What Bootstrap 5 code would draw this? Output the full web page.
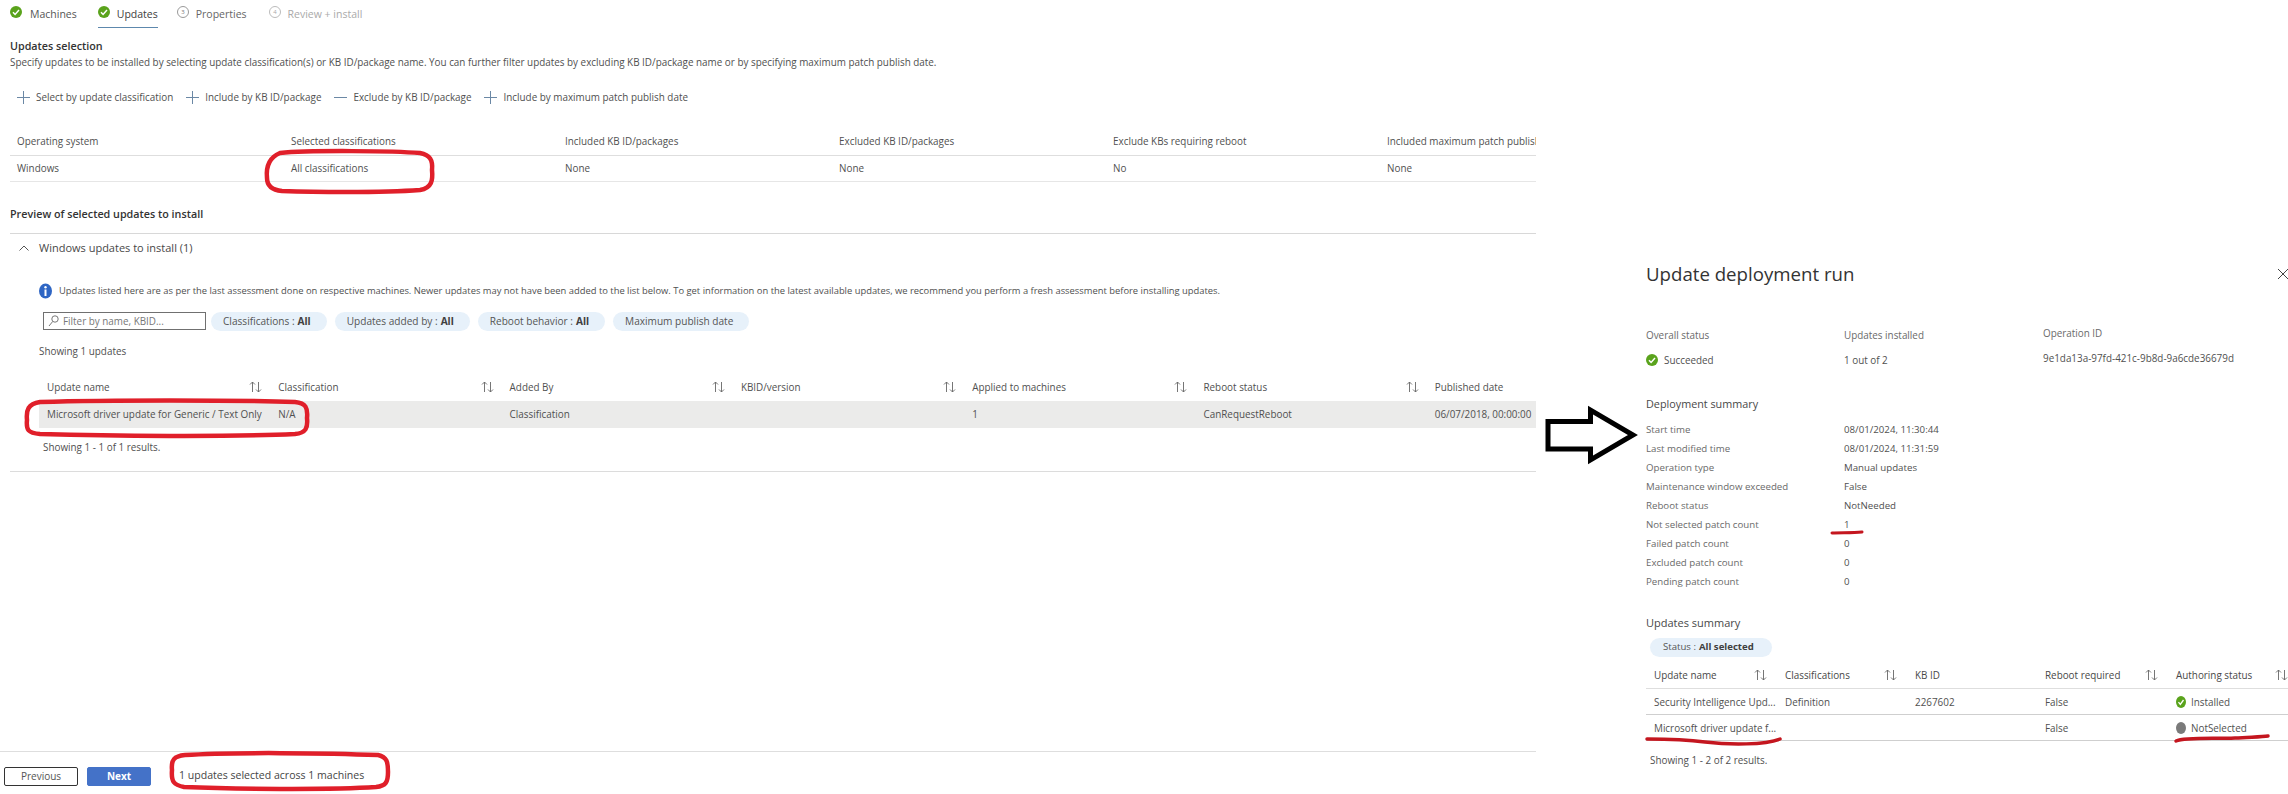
<!DOCTYPE html>
<html lang="en">
<head>
<meta charset="utf-8">
<title>Update deployment</title>
<link rel="stylesheet" href="https://cdn.jsdelivr.net/npm/bootstrap@5.3.0/dist/css/bootstrap.min.css">
<style>
body{background:#fff;color:#505050;font-family:"Open Sans","Liberation Sans",sans-serif;font-size:9.9px;line-height:16px;overflow:hidden}
.page-shell{width:2288px;height:794px;position:relative;overflow:hidden}
.left-pane{width:1536px;height:794px}
.pane-body{padding-left:10px}
.step-bar{height:27px;gap:20px}
.step-item{height:28px;gap:7px;font-size:10.5px;color:#555;padding-top:6px}
.step-item:first-child{gap:8px}
.step-item.current{border-bottom:1.5px solid #5d88ad;color:#404040;margin-left:1px;margin-right:-1px}
.step-item.todo{color:#aaa;margin-left:2px}
.step-item .step-next{color:#666}
.sec-title{font-weight:600;font-size:10.75px;color:#333;margin:0;line-height:16px}
.title-top{margin-top:11px}
.cmd-bar{margin-top:15px;height:24px;padding-left:6.5px;gap:12.5px;font-size:9.9px}
.cmd-item{gap:6.500px}
.cmd-item svg{flex:none}
.sum-wrap{margin-top:18px;width:1526px;overflow:hidden}
.sum-table{width:1644px;table-layout:fixed;margin:0;--bs-table-bg:transparent;--bs-table-color:#505050}
.sum-table th,.sum-table td{font-weight:400;padding:0 0 0 7px;white-space:nowrap;vertical-align:middle;overflow:hidden}
.sum-table th{height:28px;border-bottom:1px solid #dedede}
.sum-table td{height:26px;border-bottom:1px solid #e6e6e6}
.preview-title{margin-top:24px}
.accord-head{margin-top:11px;border-top:1px solid #d8d8d8;height:29px;padding-left:9px;gap:10px;font-size:11px;color:#484848}
.accord-body{padding-left:29px}
.info-line{margin-top:21px;padding-left:0;gap:7px;font-size:9.4px}
.filter-row{margin-top:13px;padding-left:4px;height:19px}
.filter-box{width:163px;height:18px;border:1px solid #707070;gap:4px;padding-left:4px;margin-right:5px;background:#fff}
.filter-box input{border:0;padding:0;font-size:9.9px;line-height:14px;height:14px;background:transparent;border-radius:0;color:#777;box-shadow:none}
.filter-box input::placeholder{color:#777;opacity:1}
.chip{height:19px;background:#e7f1fa;color:#555;border-radius:10px;padding:0 16px 0 12px;margin-right:8px;white-space:nowrap;display:inline-flex;align-items:center;font-size:10.1px}
.chip b{font-weight:700;color:#404040;margin-left:3px}
.count-line{margin-top:12px}
.upd-table{width:1497px;table-layout:fixed;margin:14px 0 0;--bs-table-bg:transparent;--bs-table-color:#505050}
.upd-table th,.upd-table td{font-weight:400;padding:0 0 0 8px;white-space:nowrap;border:0;overflow:hidden;vertical-align:middle}
.upd-table th{height:28px}
.upd-table td{height:27px;background:#ebebea}
.col-norm{width:231.3px}
.head-flex{padding-right:8px}
.tail-line{margin:11px 0 0 4px}
.sep-line{margin-top:16px;border-top:1px solid #dcdcdc}
.foot-bar{height:43px;border-top:1px solid #dedede;padding:15px 0 0 4px}
.btn-prev,.btn-go{height:19px;font-size:10px;line-height:17px;padding:0;border-radius:2px}
.btn-prev{width:74px;border:1px solid #333;background:#fff;color:#555;margin-right:9px}
.btn-go{width:64px;border:1px solid #4472c8;background:#4472c8;color:#fff;font-weight:700;margin-right:28px}
.foot-note{font-size:10.55px;color:#444}
.right-pane{margin-left:110px;width:642px;padding-top:261px}
.panel-title{font-size:18.65px;line-height:26px;margin:0;color:#333;font-weight:400}
.stat-row{margin-top:40px}
.stat-a{width:198px}
.stat-b{width:199px}
.stat-c{margin-top:-2px}
.stat-val{margin-top:9px;gap:6px}
.lab-muted{color:#6a6a6a}
.sub-title{font-size:10.8px;line-height:16px;color:#484848;margin:0;font-weight:400}
.dep-title{margin-top:28px}
.kv-list{margin:7.5px 0 0;font-size:9.7px}
.kv-row{height:19px;line-height:19px}
.kv-row dt{font-weight:400;width:198px;color:#6a6a6a}
.kv-row dd{margin:0}
.upd-sum{margin-top:24px;font-size:11px}
.chip-status{margin:7px 0 0 4px;width:121.5px;padding:0 0 0 13px;font-size:9.6px}
.run-wrap{margin-top:6px;width:642px;overflow:hidden}
.run-table{width:652px;table-layout:fixed;margin:0;--bs-table-bg:transparent;--bs-table-color:#505050}
.run-table th,.run-table td{font-weight:400;padding:0 0 0 8px;white-space:nowrap;overflow:hidden;vertical-align:middle}
.run-table th{height:26px;border-bottom:1px solid #dedede;color:#484848}
.run-table td{height:26px;border-bottom:1px solid #cfcfcf}
.c1{width:131px}.c2{width:130px}.c3{width:130px}.c4{width:131px}.c5{width:130px}
.head-run{padding-right:10px}
.cell-stat{gap:5px}
.overlay-ink{position:absolute;left:0;top:0;pointer-events:none}
</style>
</head>
<body>
<div class="page-shell d-flex">
  <main class="left-pane d-flex flex-column">
    <div class="pane-body">
      <div class="step-bar d-flex">
        <div class="step-item d-flex"><svg width="12" height="12" viewBox="0 0 12 12"><circle cx="6" cy="6" r="6" fill="#5aa31c"/><path d="M3 6.2l2.1 2.2L9 4" fill="none" stroke="#fff" stroke-width="1.5"/></svg><span class="step-lbl">Machines</span></div>
        <div class="step-item current d-flex"><svg width="12" height="12" viewBox="0 0 12 12"><circle cx="6" cy="6" r="6" fill="#5aa31c"/><path d="M3 6.2l2.1 2.2L9 4" fill="none" stroke="#fff" stroke-width="1.5"/></svg><span>Updates</span></div>
        <div class="step-item d-flex"><svg width="12" height="12" viewBox="0 0 12 12"><circle cx="6" cy="6" r="5.500" fill="none" stroke="#999"/><text x="6" y="8" font-size="6" text-anchor="middle" fill="#777">3</text></svg><span class="step-next">Properties</span></div>
        <div class="step-item todo d-flex"><svg width="12" height="12" viewBox="0 0 12 12"><circle cx="6" cy="6" r="5.500" fill="none" stroke="#bbb"/><text x="6" y="8" font-size="6" text-anchor="middle" fill="#aaa">4</text></svg><span>Review + install</span></div>
      </div>
      <h2 class="sec-title title-top">Updates selection</h2>
      <p class="mb-0">Specify updates to be installed by selecting update classification(s) or KB ID/package name. You can further filter updates by excluding KB ID/package name or by specifying maximum patch publish date.</p>
      <div class="cmd-bar d-flex align-items-center">
        <span class="cmd-item d-flex align-items-center"><svg width="13" height="13" viewBox="0 0 13 13"><path d="M6.500 0v13M0 6.500h13" stroke="#6b88a5" fill="none"/></svg>Select by update classification</span>
        <span class="cmd-item d-flex align-items-center"><svg width="13" height="13" viewBox="0 0 13 13"><path d="M6.500 0v13M0 6.500h13" stroke="#6b88a5" fill="none"/></svg>Include by KB ID/package</span>
        <span class="cmd-item d-flex align-items-center"><svg width="13" height="13" viewBox="0 0 13 13"><path d="M0 6.500h13" stroke="#6b88a5" fill="none"/></svg>Exclude by KB ID/package</span>
        <span class="cmd-item d-flex align-items-center"><svg width="13" height="13" viewBox="0 0 13 13"><path d="M6.500 0v13M0 6.500h13" stroke="#6b88a5" fill="none"/></svg>Include by maximum patch publish date</span>
      </div>
      <div class="sum-wrap">
        <table class="table sum-table">
          <thead><tr><th>Operating system</th><th>Selected classifications</th><th>Included KB ID/packages</th><th>Excluded KB ID/packages</th><th>Exclude KBs requiring reboot</th><th>Included maximum patch publish date</th></tr></thead>
          <tbody><tr><td>Windows</td><td>All classifications</td><td>None</td><td>None</td><td>No</td><td>None</td></tr></tbody>
        </table>
      </div>
      <h2 class="sec-title preview-title">Preview of selected updates to install</h2>
      <div class="accord-head d-flex align-items-center"><svg width="10" height="6" viewBox="0 0 10 6"><path d="M.5 5.500L5 1l4.500 4.500" fill="none" stroke="#555"/></svg>Windows updates to install (1)</div>
      <div class="accord-body">
        <div class="info-line d-flex align-items-center"><svg class="flex-shrink-0" width="13" height="16" viewBox="0 0 13 16"><ellipse cx="6.500" cy="8" rx="6.500" ry="7.500" fill="#2f66c4"/><circle cx="6.500" cy="4.300" r="1.200" fill="#fff"/><rect x="5.500" y="6.500" width="2" height="6.500" fill="#fff"/></svg><span>Updates listed here are as per the last assessment done on respective machines. Newer updates may not have been added to the list below. To get information on the latest available updates, we recommend you perform a fresh assessment before installing updates.</span></div>
        <div class="filter-row d-flex align-items-center">
          <div class="filter-box d-flex align-items-center"><svg class="flex-shrink-0" width="11" height="12" viewBox="0 0 11 12"><circle cx="7" cy="4" r="3.200" fill="none" stroke="#777"/><path d="M4.700 6.500L1 11" stroke="#777" fill="none"/></svg><input class="form-control" placeholder="Filter by name, KBID..." aria-label="Filter"></div>
          <span class="chip">Classifications :<b>All</b></span>
          <span class="chip">Updates added by :<b>All</b></span>
          <span class="chip">Reboot behavior :<b>All</b></span>
          <span class="chip">Maximum publish date</span>
        </div>
        <div class="count-line">Showing 1 updates</div>
        <table class="table upd-table">
          <colgroup><col class="col-norm"><col class="col-norm"><col class="col-norm"><col class="col-norm"><col class="col-norm"><col class="col-norm"><col></colgroup>
          <thead><tr>
            <th><div class="head-flex d-flex justify-content-between align-items-center">Update name<svg width="13" height="12" viewBox="0 0 13 12"><path d="M3.500 11V1M1 3.500L3.500 1 6 3.500M9.500 1v10M7 8.500L9.500 11 12 8.500" fill="none" stroke="#666" stroke-width=".9"/></svg></div></th>
            <th><div class="head-flex d-flex justify-content-between align-items-center">Classification<svg width="13" height="12" viewBox="0 0 13 12"><path d="M3.500 11V1M1 3.500L3.500 1 6 3.500M9.500 1v10M7 8.500L9.500 11 12 8.500" fill="none" stroke="#666" stroke-width=".9"/></svg></div></th>
            <th><div class="head-flex d-flex justify-content-between align-items-center">Added By<svg width="13" height="12" viewBox="0 0 13 12"><path d="M3.500 11V1M1 3.500L3.500 1 6 3.500M9.500 1v10M7 8.500L9.500 11 12 8.500" fill="none" stroke="#666" stroke-width=".9"/></svg></div></th>
            <th><div class="head-flex d-flex justify-content-between align-items-center">KBID/version<svg width="13" height="12" viewBox="0 0 13 12"><path d="M3.500 11V1M1 3.500L3.500 1 6 3.500M9.500 1v10M7 8.500L9.500 11 12 8.500" fill="none" stroke="#666" stroke-width=".9"/></svg></div></th>
            <th><div class="head-flex d-flex justify-content-between align-items-center">Applied to machines<svg width="13" height="12" viewBox="0 0 13 12"><path d="M3.500 11V1M1 3.500L3.500 1 6 3.500M9.500 1v10M7 8.500L9.500 11 12 8.500" fill="none" stroke="#666" stroke-width=".9"/></svg></div></th>
            <th><div class="head-flex d-flex justify-content-between align-items-center">Reboot status<svg width="13" height="12" viewBox="0 0 13 12"><path d="M3.500 11V1M1 3.500L3.500 1 6 3.500M9.500 1v10M7 8.500L9.500 11 12 8.500" fill="none" stroke="#666" stroke-width=".9"/></svg></div></th>
            <th>Published date</th>
          </tr></thead>
          <tbody><tr><td>Microsoft driver update for Generic / Text Only</td><td>N/A</td><td>Classification</td><td></td><td>1</td><td>CanRequestReboot</td><td>06/07/2018, 00:00:00</td></tr></tbody>
        </table>
        <div class="tail-line">Showing 1 - 1 of 1 results.</div>
      </div>
      <div class="sep-line"></div>
    </div>
    <div class="foot-bar mt-auto d-flex align-items-start">
      <button class="btn btn-prev" type="button">Previous</button>
      <button class="btn btn-go" type="button">Next</button>
      <span class="foot-note">1 updates selected across 1 machines</span>
    </div>
  </main>
  <aside class="right-pane flex-shrink-0">
    <div class="d-flex justify-content-between align-items-center">
      <h1 class="panel-title">Update deployment run</h1>
      <svg width="10" height="10" viewBox="0 0 10 10"><path d="M0 0l10 10M10 0L0 10" stroke="#444" fill="none"/></svg>
    </div>
    <div class="stat-row d-flex">
      <div class="stat-a"><div class="lab-muted">Overall status</div><div class="stat-val d-flex align-items-center"><svg width="12" height="12" viewBox="0 0 12 12"><circle cx="6" cy="6" r="6" fill="#5aa31c"/><path d="M3 6.200l2.100 2.200L9 4" fill="none" stroke="#fff" stroke-width="1.500"/></svg>Succeeded</div></div>
      <div class="stat-b"><div class="lab-muted">Updates installed</div><div class="stat-val">1 out of 2</div></div>
      <div class="stat-c"><div class="lab-muted">Operation ID</div><div class="stat-val">9e1da13a-97fd-421c-9b8d-9a6cde36679d</div></div>
    </div>
    <h3 class="sub-title dep-title">Deployment summary</h3>
    <dl class="kv-list">
      <div class="kv-row d-flex"><dt>Start time</dt><dd>08/01/2024, 11:30:44</dd></div>
      <div class="kv-row d-flex"><dt>Last modified time</dt><dd>08/01/2024, 11:31:59</dd></div>
      <div class="kv-row d-flex"><dt>Operation type</dt><dd>Manual updates</dd></div>
      <div class="kv-row d-flex"><dt>Maintenance window exceeded</dt><dd>False</dd></div>
      <div class="kv-row d-flex"><dt>Reboot status</dt><dd>NotNeeded</dd></div>
      <div class="kv-row d-flex"><dt>Not selected patch count</dt><dd>1</dd></div>
      <div class="kv-row d-flex"><dt>Failed patch count</dt><dd>0</dd></div>
      <div class="kv-row d-flex"><dt>Excluded patch count</dt><dd>0</dd></div>
      <div class="kv-row d-flex"><dt>Pending patch count</dt><dd>0</dd></div>
    </dl>
    <h3 class="sub-title upd-sum">Updates summary</h3>
    <span class="chip chip-status">Status :<b>All selected</b></span>
    <div class="run-wrap">
      <table class="table run-table">
        <colgroup><col class="c1"><col class="c2"><col class="c3"><col class="c4"><col class="c5"></colgroup>
        <thead><tr>
          <th><div class="head-run d-flex justify-content-between align-items-center">Update name<svg width="13" height="12" viewBox="0 0 13 12"><path d="M3.500 11V1M1 3.500L3.500 1 6 3.500M9.500 1v10M7 8.500L9.500 11 12 8.500" fill="none" stroke="#666" stroke-width=".9"/></svg></div></th>
          <th><div class="head-run d-flex justify-content-between align-items-center">Classifications<svg width="13" height="12" viewBox="0 0 13 12"><path d="M3.500 11V1M1 3.500L3.500 1 6 3.500M9.500 1v10M7 8.500L9.500 11 12 8.500" fill="none" stroke="#666" stroke-width=".9"/></svg></div></th>
          <th>KB ID</th>
          <th><div class="head-run d-flex justify-content-between align-items-center">Reboot required<svg width="13" height="12" viewBox="0 0 13 12"><path d="M3.500 11V1M1 3.500L3.500 1 6 3.500M9.500 1v10M7 8.500L9.500 11 12 8.500" fill="none" stroke="#666" stroke-width=".9"/></svg></div></th>
          <th><div class="head-run d-flex justify-content-between align-items-center">Authoring status<svg width="13" height="12" viewBox="0 0 13 12"><path d="M3.500 11V1M1 3.500L3.500 1 6 3.500M9.500 1v10M7 8.500L9.500 11 12 8.500" fill="none" stroke="#666" stroke-width=".9"/></svg></div></th>
        </tr></thead>
        <tbody>
          <tr><td>Security Intelligence Upd...</td><td>Definition</td><td>2267602</td><td>False</td><td><div class="cell-stat d-flex align-items-center"><svg width="10" height="12" viewBox="0 0 10 12"><ellipse cx="5" cy="6" rx="5" ry="6" fill="#5aa31c"/><path d="M2.500 6.200l1.800 2.200L7.500 4" fill="none" stroke="#fff" stroke-width="1.300"/></svg>Installed</div></td></tr>
          <tr><td>Microsoft driver update f...</td><td></td><td></td><td>False</td><td><div class="cell-stat d-flex align-items-center"><svg width="10" height="12" viewBox="0 0 10 12"><ellipse cx="5" cy="6" rx="5" ry="6" fill="#7a7a7a"/></svg>NotSelected</div></td></tr>
        </tbody>
      </table>
    </div>
    <div class="tail-line">Showing 1 - 2 of 2 results.</div>
  </aside>
  <svg class="overlay-ink" width="2288" height="794" viewBox="0 0 2288 794" fill="none" aria-hidden="true">
    <path d="M280 153C310 150 395 151 420 153C430 155 433 160 432 170C433 180 432 188 420 190C380 193 310 192 282 191C272 190 267 186 267 178C266 168 268 158 280 153Z" stroke="#e01f2a" stroke-width="4.500"/>
    <path d="M40 402C110 400 230 400 295 402C306 403 308 408 307 418C308 428 306 433 295 434C230 437 110 436 40 434C28 433 26 430 27 420C26 410 28 404 40 402Z" stroke="#e01f2a" stroke-width="4.500"/>
    <path d="M185 755C230 752 330 753 378 755C387 757 388 762 388 772C388 782 386 786 376 787C330 790 230 789 184 787C174 785 171 782 172 770C171 760 174 756 185 755Z" stroke="#e01f2a" stroke-width="4.500"/>
    <path d="M1548 421.500H1590.500V410L1633 435L1590.500 460V449H1548Z" stroke="#000" stroke-width="5" stroke-linejoin="miter"/>
    <path d="M1832 533C1842 532.500 1852 533 1862 532" stroke="#c4161f" stroke-width="3" stroke-linecap="round"/>
    <path d="M1647 739C1675 739 1690 740 1705 742C1730 745 1765 745 1780 739" stroke="#c4161f" stroke-width="3.500" stroke-linecap="round"/>
    <path d="M2176 741C2185 737 2215 739 2235 738C2250 737 2262 737 2268 736" stroke="#c4161f" stroke-width="3.500" stroke-linecap="round"/>
  </svg>
</div>
<script src="https://cdn.jsdelivr.net/npm/bootstrap@5.3.0/dist/js/bootstrap.bundle.min.js"></script>
</body>
</html>
